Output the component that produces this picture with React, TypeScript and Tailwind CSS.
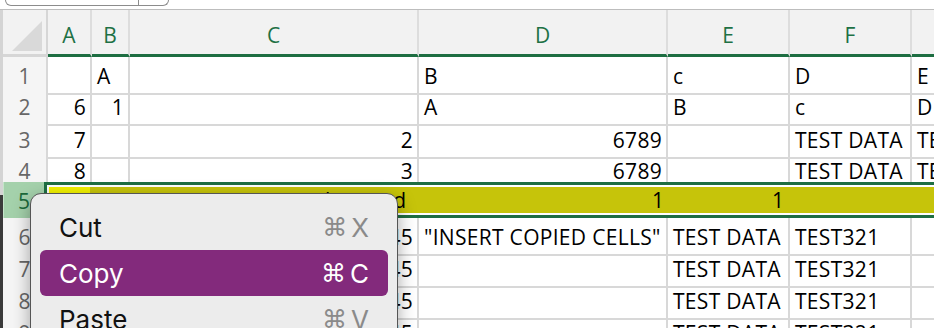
import React from "react";

type Cell = { t?: string; r?: boolean };

const GRID =
  "grid grid-cols-[45px_44px_38px_289px_249px_122px_122px_200px] shrink-0";

const E: Cell = {};

const rows: { n: number; h: string; cells: Cell[] }[] = [
  {
    n: 1,
    h: "h-[31px]",
    cells: [E, { t: "A" }, E, { t: "B" }, { t: "c" }, { t: "D" }, { t: "E" }],
  },
  {
    n: 2,
    h: "h-[33px]",
    cells: [
      { t: "6", r: true },
      { t: "1", r: true },
      E,
      { t: "A" },
      { t: "B" },
      { t: "c" },
      { t: "D" },
    ],
  },
  {
    n: 3,
    h: "h-[31px]",
    cells: [
      { t: "7", r: true },
      E,
      { t: "2", r: true },
      { t: "6789", r: true },
      E,
      { t: "TEST DATA" },
      { t: "TEST DATA" },
    ],
  },
  {
    n: 4,
    h: "h-[30px]",
    cells: [
      { t: "8", r: true },
      E,
      { t: "3", r: true },
      { t: "6789", r: true },
      E,
      { t: "TEST DATA" },
      { t: "TEST DATA" },
    ],
  },
];

const rowsAfter: { n: number; h: string; cells: Cell[] }[] = [
  {
    n: 6,
    h: "h-[32px]",
    cells: [
      E,
      E,
      { t: "45", r: true },
      { t: '"INSERT COPIED CELLS"' },
      { t: "TEST DATA" },
      { t: "TEST321" },
      E,
    ],
  },
  {
    n: 7,
    h: "h-[32px]",
    cells: [E, E, { t: "45", r: true }, E, { t: "TEST DATA" }, { t: "TEST321" }, E],
  },
  {
    n: 8,
    h: "h-[32px]",
    cells: [E, E, { t: "45", r: true }, E, { t: "TEST DATA" }, { t: "TEST321" }, E],
  },
  {
    n: 9,
    h: "h-[32px]",
    cells: [E, E, { t: "45", r: true }, E, { t: "TEST DATA" }, { t: "TEST321" }, E],
  },
];

function Row({ n, h, cells }: { n: number; h: string; cells: Cell[] }) {
  return (
    <div className={`${GRID} ${h}`}>
      <div className="flex items-center justify-center pt-[4px] bg-[#f5f5f5] border-r-2 border-b-2 border-[#d8d8d8] text-[#676767]">
        {n}
      </div>
      {cells.map((c, i) => (
        <div
          key={i}
          className={`flex items-center pt-[4px] border-r-2 border-b-2 border-[#d8d8d8] overflow-hidden whitespace-nowrap tracking-[0.3px] ${
            c.r ? "justify-end pr-[4px]" : "pl-[5px]"
          }`}
        >
          {c.t}
        </div>
      ))}
    </div>
  );
}

const headers = ["A", "B", "C", "D", "E", "F", ""];

function MenuItem({
  label,
  keyChar,
  active,
}: {
  label: string;
  keyChar: string;
  active?: boolean;
}) {
  return (
    <div
      className={`h-[46px] rounded-[6px] px-[19px] flex items-center justify-between ${
        active ? "bg-[#832a7c] text-white" : "text-[#111]"
      }`}
    >
      <span>{label}</span>
      <span
        className={`flex items-center gap-[4px] ${
          active ? "text-white" : "text-[#8a8a8a]"
        }`}
      >
        <span className="font-['DejaVu_Sans'] text-[25px] leading-none">⌘</span>
        <span>{keyChar}</span>
      </span>
    </div>
  );
}

export default function App() {
  return (
    <div className="relative w-[934px] h-[328px] overflow-hidden bg-white font-['Open_Sans',sans-serif] text-[21px] text-black">
      {/* top toolbar remnant */}
      <div className="h-[9px] bg-white flex">
        <div className="ml-[5px] w-[164px] h-[6px] border-x border-b border-[#8c8c8c] rounded-b-[6px] bg-white flex">
          <div className="w-[133px] border-r border-[#8c8c8c]" />
        </div>
      </div>
      <div className="h-[1px] bg-[#bdbdbd]" />

      <div className="flex">
        {/* left window edge */}
        <div className="w-[3px] shrink-0 flex flex-col">
          <div className="h-[185px] bg-[#d4d4d4]" />
          <div className="flex-1 bg-[#3b3b3b]" />
        </div>

        <div className="flex-1 min-w-0 flex flex-col">
          {/* column headers */}
          <div className={`${GRID} h-[47px] bg-[#f2f2f2]`}>
            <div className="border-r-2 border-b-[3px] border-[#d6d6d6] flex items-end justify-end pr-[4px] pb-[3px]">
              <svg width="30" height="30" viewBox="0 0 30 30">
                <polygon points="30,0 30,30 0,30" fill="#d9d9d9" />
              </svg>
            </div>
            {headers.map((h, i) => (
              <div
                key={i}
                className="relative flex items-center justify-center pt-[7px] border-b-[3px] border-b-[#1e6e42] border-r-2 border-r-[#dddddd] text-[#1e7145] font-medium"
              >
                {h}
              </div>
            ))}
          </div>

          {rows.map((r) => (
            <Row key={r.n} {...r} />
          ))}

          {/* selected row 5 */}
          <div className="flex h-[36px] shrink-0 w-[1109px]">
            <div className="w-[41px] shrink-0 bg-[#a4d1ab] border-l border-[#c5e5ca] flex items-center justify-center pt-[4px] text-[#1b6a3a]">
              5
            </div>
            <div className="flex-1 border-l-[3px] border-y-[3px] border-[#1e6e42] p-[2px] bg-white">
              <div className="h-full flex bg-[#c6c40a] whitespace-nowrap">
                <div className="w-[41px] shrink-0 bg-[#f2f200]" />
                <div className="w-[40px] shrink-0" />
                <div className="w-[289px] shrink-0 flex items-center justify-end pr-[13px] pt-[2px]">
                  Inserted
                </div>
                <div className="w-[249px] shrink-0 flex items-center justify-end pr-[4px] pt-[2px]">
                  1
                </div>
                <div className="w-[122px] shrink-0 flex items-center justify-end pr-[6px] pt-[2px]">
                  1
                </div>
                <div className="flex-1" />
              </div>
            </div>
          </div>

          {rowsAfter.map((r) => (
            <Row key={r.n} {...r} />
          ))}
        </div>
      </div>

      {/* context menu */}
      <div className="absolute left-[30px] top-[193px] w-[368px] h-[170px] rounded-[11px] bg-[#ececec] border border-[#555555] shadow-[0_6px_18px_rgba(0,0,0,0.35)] px-[9px] pt-[10px] font-['Inter',sans-serif] text-[26px]">
        <MenuItem label="Cut" keyChar="X" />
        <MenuItem label="Copy" keyChar="C" active />
        <MenuItem label="Paste" keyChar="V" />
      </div>
    </div>
  );
}
